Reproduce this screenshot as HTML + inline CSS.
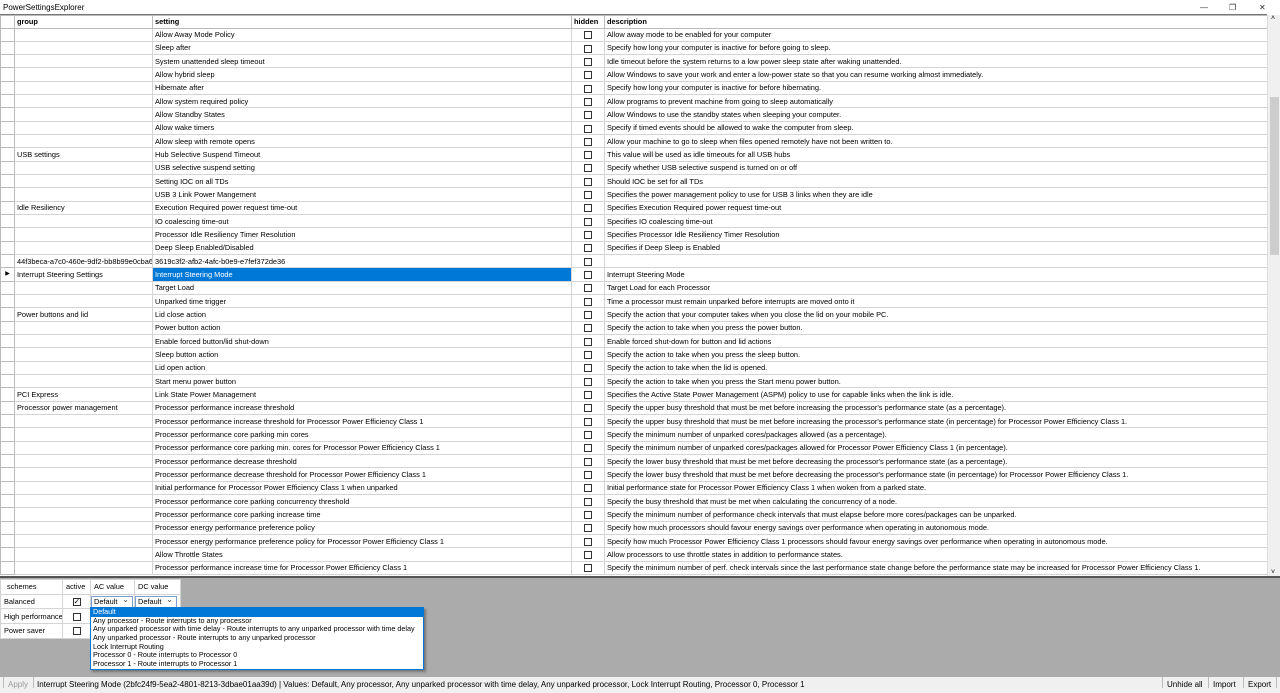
<!DOCTYPE html>
<html><head><meta charset="utf-8"><style>
*{margin:0;padding:0;box-sizing:border-box}
body{width:1280px;height:693px;overflow:hidden;background:#fff;font-family:"Liberation Sans",sans-serif;font-size:7.4px;color:#000;position:relative}
.title{position:absolute;left:0;top:0;width:1280px;height:15px;background:#fff}
.title span{position:absolute;left:3px;top:3px;font-size:8px}
.wc{position:absolute;top:1px;font-size:9px;color:#333}
.grid{position:absolute;left:0;top:14px;width:1267px;height:562px;overflow:hidden;border-top:1px solid #777}
table{border-collapse:collapse;table-layout:fixed;width:1267px}
td,th{height:13.33px;border:1px solid #d4d4d4;padding:0 0 0 2px;white-space:nowrap;overflow:hidden;text-align:left;font-weight:normal;line-height:11px}
th{font-weight:bold;background:#fff;border-color:#bbb;height:12.5px}
td.rh,th.rh{background:#fff;padding:0;border-color:#bbb}
td.ck{text-align:center;padding:0}
.cb{display:inline-block;width:8px;height:8px;border:1px solid #333;vertical-align:middle;background:#fff}
tr.sel td.st{background:#0078d7;color:#fff}
.sb{position:absolute;left:1267px;top:15px;width:13px;height:561px;background:#f0f0f0;border-left:1px solid #ddd}
.thumb{position:absolute;left:2px;top:82px;width:9px;height:158px;background:#cdcdcd}
.panel{position:absolute;left:0;top:576px;width:1280px;height:101px;background:#ababab;border-top:2px solid #555}
.st2{position:absolute;left:0;top:579px;border-collapse:collapse;width:180px;background:#fff}
.st2 td{height:14.7px;border:1px solid #d4d4d4;font-size:7.4px;padding-left:3px}
.dd{display:inline-block;border:1px solid #7a9fd0;height:12px;width:42px;padding-left:2px;line-height:10px;position:relative;background:#fff}
.dd:after{content:"⌄";position:absolute;right:3px;top:-2px;font-size:8px;color:#444}
.list{position:absolute;left:90px;top:607px;width:334px;height:63px;background:#fff;border:1px solid #0078d7;box-shadow:2px 2px 2px #777}
.list div{height:8.7px;line-height:8.7px;padding-left:2px;font-size:7.2px}
.list .hi{background:#0078d7;color:#fff}
.status{position:absolute;left:0;top:677px;width:1280px;height:16px;background:#f0f0f0;font-size:8px;line-height:16px}
.status span{position:absolute;top:0}
.sep{position:absolute;top:3px;width:1px;height:11px;background:#bbb}
</style></head><body>
<div class="title"><span>PowerSettingsExplorer</span><span class="wc" style="left:1200px">—</span><span class="wc" style="left:1229px">❐</span><span class="wc" style="left:1259px">✕</span></div>
<div class="grid"><table>
<colgroup><col style="width:14px"><col style="width:138px"><col style="width:419px"><col style="width:33px"><col style="width:663px"></colgroup>
<tr><th class="rh"></th><th>group</th><th>setting</th><th>hidden</th><th>description</th></tr>
<tr><td class="rh"></td><td></td><td class="st">Allow Away Mode Policy</td><td class="ck"><span class="cb"></span></td><td>Allow away mode to be enabled for your computer</td></tr>
<tr><td class="rh"></td><td></td><td class="st">Sleep after</td><td class="ck"><span class="cb"></span></td><td>Specify how long your computer is inactive for before going to sleep.</td></tr>
<tr><td class="rh"></td><td></td><td class="st">System unattended sleep timeout</td><td class="ck"><span class="cb"></span></td><td>Idle timeout before the system returns to a low power sleep state after waking unattended.</td></tr>
<tr><td class="rh"></td><td></td><td class="st">Allow hybrid sleep</td><td class="ck"><span class="cb"></span></td><td>Allow Windows to save your work and enter a low-power state so that you can resume working almost immediately.</td></tr>
<tr><td class="rh"></td><td></td><td class="st">Hibernate after</td><td class="ck"><span class="cb"></span></td><td>Specify how long your computer is inactive for before hibernating.</td></tr>
<tr><td class="rh"></td><td></td><td class="st">Allow system required policy</td><td class="ck"><span class="cb"></span></td><td>Allow programs to prevent machine from going to sleep automatically</td></tr>
<tr><td class="rh"></td><td></td><td class="st">Allow Standby States</td><td class="ck"><span class="cb"></span></td><td>Allow Windows to use the standby states when sleeping your computer.</td></tr>
<tr><td class="rh"></td><td></td><td class="st">Allow wake timers</td><td class="ck"><span class="cb"></span></td><td>Specify if timed events should be allowed to wake the computer from sleep.</td></tr>
<tr><td class="rh"></td><td></td><td class="st">Allow sleep with remote opens</td><td class="ck"><span class="cb"></span></td><td>Allow your machine to go to sleep when files opened remotely have not been written to.</td></tr>
<tr><td class="rh"></td><td>USB settings</td><td class="st">Hub Selective Suspend Timeout</td><td class="ck"><span class="cb"></span></td><td>This value will be used as idle timeouts for all USB hubs</td></tr>
<tr><td class="rh"></td><td></td><td class="st">USB selective suspend setting</td><td class="ck"><span class="cb"></span></td><td>Specify whether USB selective suspend is turned on or off</td></tr>
<tr><td class="rh"></td><td></td><td class="st">Setting IOC on all TDs</td><td class="ck"><span class="cb"></span></td><td>Should IOC be set for all TDs</td></tr>
<tr><td class="rh"></td><td></td><td class="st">USB 3 Link Power Mangement</td><td class="ck"><span class="cb"></span></td><td>Specifies the power management policy to use for USB 3 links when they are idle</td></tr>
<tr><td class="rh"></td><td>Idle Resiliency</td><td class="st">Execution Required power request time-out</td><td class="ck"><span class="cb"></span></td><td>Specifies Execution Required power request time-out</td></tr>
<tr><td class="rh"></td><td></td><td class="st">IO coalescing time-out</td><td class="ck"><span class="cb"></span></td><td>Specifies IO coalescing time-out</td></tr>
<tr><td class="rh"></td><td></td><td class="st">Processor Idle Resiliency Timer Resolution</td><td class="ck"><span class="cb"></span></td><td>Specifies Processor Idle Resiliency Timer Resolution</td></tr>
<tr><td class="rh"></td><td></td><td class="st">Deep Sleep Enabled/Disabled</td><td class="ck"><span class="cb"></span></td><td>Specifies if Deep Sleep is Enabled</td></tr>
<tr><td class="rh"></td><td>44f3beca-a7c0-460e-9df2-bb8b99e0cba6</td><td class="st">3619c3f2-afb2-4afc-b0e9-e7fef372de36</td><td class="ck"><span class="cb"></span></td><td></td></tr>
<tr class="sel"><td class="rh" style="font-size:6px;text-align:center">▶</td><td>Interrupt Steering Settings</td><td class="st">Interrupt Steering Mode</td><td class="ck"><span class="cb"></span></td><td>Interrupt Steering Mode</td></tr>
<tr><td class="rh"></td><td></td><td class="st">Target Load</td><td class="ck"><span class="cb"></span></td><td>Target Load for each Processor</td></tr>
<tr><td class="rh"></td><td></td><td class="st">Unparked time trigger</td><td class="ck"><span class="cb"></span></td><td>Time a processor must remain unparked before interrupts are moved onto it</td></tr>
<tr><td class="rh"></td><td>Power buttons and lid</td><td class="st">Lid close action</td><td class="ck"><span class="cb"></span></td><td>Specify the action that your computer takes when you close the lid on your mobile PC.</td></tr>
<tr><td class="rh"></td><td></td><td class="st">Power button action</td><td class="ck"><span class="cb"></span></td><td>Specify the action to take when you press the power button.</td></tr>
<tr><td class="rh"></td><td></td><td class="st">Enable forced button/lid shut-down</td><td class="ck"><span class="cb"></span></td><td>Enable forced shut-down for button and lid actions</td></tr>
<tr><td class="rh"></td><td></td><td class="st">Sleep button action</td><td class="ck"><span class="cb"></span></td><td>Specify the action to take when you press the sleep button.</td></tr>
<tr><td class="rh"></td><td></td><td class="st">Lid open action</td><td class="ck"><span class="cb"></span></td><td>Specify the action to take when the lid is opened.</td></tr>
<tr><td class="rh"></td><td></td><td class="st">Start menu power button</td><td class="ck"><span class="cb"></span></td><td>Specify the action to take when you press the Start menu power button.</td></tr>
<tr><td class="rh"></td><td>PCI Express</td><td class="st">Link State Power Management</td><td class="ck"><span class="cb"></span></td><td>Specifies the Active State Power Management (ASPM) policy to use for capable links when the link is idle.</td></tr>
<tr><td class="rh"></td><td>Processor power management</td><td class="st">Processor performance increase threshold</td><td class="ck"><span class="cb"></span></td><td>Specify the upper busy threshold that must be met before increasing the processor's performance state (as a percentage).</td></tr>
<tr><td class="rh"></td><td></td><td class="st">Processor performance increase threshold for Processor Power Efficiency Class 1</td><td class="ck"><span class="cb"></span></td><td>Specify the upper busy threshold that must be met before increasing the processor's performance state (in percentage) for Processor Power Efficiency Class 1.</td></tr>
<tr><td class="rh"></td><td></td><td class="st">Processor performance core parking min cores</td><td class="ck"><span class="cb"></span></td><td>Specify the minimum number of unparked cores/packages allowed (as a percentage).</td></tr>
<tr><td class="rh"></td><td></td><td class="st">Processor performance core parking min. cores for Processor Power Efficiency Class 1</td><td class="ck"><span class="cb"></span></td><td>Specify the minimum number of unparked cores/packages allowed for Processor Power Efficiency Class 1 (in percentage).</td></tr>
<tr><td class="rh"></td><td></td><td class="st">Processor performance decrease threshold</td><td class="ck"><span class="cb"></span></td><td>Specify the lower busy threshold that must be met before decreasing the processor's performance state (as a percentage).</td></tr>
<tr><td class="rh"></td><td></td><td class="st">Processor performance decrease threshold for Processor Power Efficiency Class 1</td><td class="ck"><span class="cb"></span></td><td>Specify the lower busy threshold that must be met before decreasing the processor's performance state (in percentage) for Processor Power Efficiency Class 1.</td></tr>
<tr><td class="rh"></td><td></td><td class="st">Initial performance for Processor Power Efficiency Class 1 when unparked</td><td class="ck"><span class="cb"></span></td><td>Initial performance state for Processor Power Efficiency Class 1 when woken from a parked state.</td></tr>
<tr><td class="rh"></td><td></td><td class="st">Processor performance core parking concurrency threshold</td><td class="ck"><span class="cb"></span></td><td>Specify the busy threshold that must be met when calculating the concurrency of a node.</td></tr>
<tr><td class="rh"></td><td></td><td class="st">Processor performance core parking increase time</td><td class="ck"><span class="cb"></span></td><td>Specify the minimum number of performance check intervals that must elapse before more cores/packages can be unparked.</td></tr>
<tr><td class="rh"></td><td></td><td class="st">Processor energy performance preference policy</td><td class="ck"><span class="cb"></span></td><td>Specify how much processors should favour energy savings over performance when operating in autonomous mode.</td></tr>
<tr><td class="rh"></td><td></td><td class="st">Processor energy performance preference policy for Processor Power Efficiency Class 1</td><td class="ck"><span class="cb"></span></td><td>Specify how much Processor Power Efficiency Class 1 processors should favour energy savings over performance when operating in autonomous mode.</td></tr>
<tr><td class="rh"></td><td></td><td class="st">Allow Throttle States</td><td class="ck"><span class="cb"></span></td><td>Allow processors to use throttle states in addition to performance states.</td></tr>
<tr><td class="rh"></td><td></td><td class="st">Processor performance increase time for Processor Power Efficiency Class 1</td><td class="ck"><span class="cb"></span></td><td>Specify the minimum number of perf. check intervals since the last performance state change before the performance state may be increased for Processor Power Efficiency Class 1.</td></tr>
</table></div>
<div class="sb"><div style="position:absolute;top:0;left:3px;font-size:7px">˄</div><div class="thumb"></div><div style="position:absolute;bottom:0;left:3px;font-size:7px">˅</div></div>
<div class="panel"></div>
<table class="st2">
<colgroup><col style="width:62px"><col style="width:28px"><col style="width:44px"><col style="width:46px"></colgroup>
<tr><td style="padding-left:6px">schemes</td><td>active</td><td>AC value</td><td>DC value</td></tr>
<tr><td>Balanced</td><td style="text-align:center;padding:0"><span class="cb" style="font-size:8px;line-height:6px;text-align:center">✓</span></td><td style="padding:0"><span class="dd">Default</span></td><td style="padding:0"><span class="dd">Default</span></td></tr>
<tr><td>High performance</td><td style="text-align:center;padding:0"><span class="cb"></span></td><td style="border:none;background:#ababab"></td><td style="border:none;background:#ababab"></td></tr>
<tr><td>Power saver</td><td style="text-align:center;padding:0"><span class="cb"></span></td><td style="border:none;background:#ababab"></td><td style="border:none;background:#ababab"></td></tr>
</table>
<div class="list">
<div class="hi">Default</div>
<div>Any processor - Route interrupts to any processor</div>
<div>Any unparked processor with time delay - Route interrupts to any unparked processor with time delay</div>
<div>Any unparked processor - Route interrupts to any unparked processor</div>
<div>Lock Interrupt Routing</div>
<div>Processor 0 - Route interrupts to Processor 0</div>
<div>Processor 1 - Route interrupts to Processor 1</div>
</div>
<div class="status">
<span class="sep" style="left:3px"></span><span style="left:8px;color:#999">Apply</span><span class="sep" style="left:33px"></span>
<span style="left:37px">Interrupt Steering Mode (2bfc24f9-5ea2-4801-8213-3dbae01aa39d) | Values: Default, Any processor, Any unparked processor with time delay, Any unparked processor, Lock Interrupt Routing, Processor 0, Processor 1</span>
<span class="sep" style="left:1162px"></span><span style="left:1167px">Unhide all</span><span class="sep" style="left:1208px"></span><span style="left:1213px">Import</span><span class="sep" style="left:1243px"></span><span style="left:1248px">Export</span><span class="sep" style="left:1276px"></span>
</div>
</body></html>
